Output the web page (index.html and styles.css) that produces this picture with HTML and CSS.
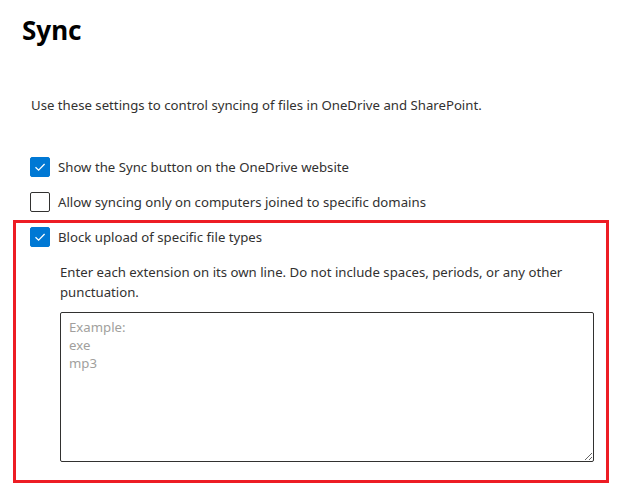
FILE: index.html
```html
<!DOCTYPE html>
<html>
<head>
<meta charset="utf-8">
<link rel="stylesheet" href="styles.css">
</head>
<body>
<div class="page">
  <h1 class="title">Sync</h1>
  <p class="desc">Use these settings to control syncing of files in OneDrive and SharePoint.</p>
  <div class="options">
    <label class="opt">
      <span class="box checked"><svg viewBox="0 0 20 20" width="20" height="20"><path d="M5.5 10.2 L8.6 13.2 L14.6 7" fill="none" stroke="#fff" stroke-width="1.3"/></svg></span>
      <span class="lbl">Show the Sync button on the OneDrive website</span>
    </label>
    <label class="opt">
      <span class="box"></span>
      <span class="lbl">Allow syncing only on computers joined to specific domains</span>
    </label>
    <div class="highlight">
      <label class="opt">
        <span class="box checked"><svg viewBox="0 0 20 20" width="20" height="20"><path d="M5.5 10.2 L8.6 13.2 L14.6 7" fill="none" stroke="#fff" stroke-width="1.3"/></svg></span>
        <span class="lbl">Block upload of specific file types</span>
      </label>
      <div class="sub">
        <p class="hint">Enter each extension on its own line. Do not include spaces, periods, or any other punctuation.</p>
        <textarea class="ta" placeholder="Example:&#10;exe&#10;mp3"></textarea>
      </div>
    </div>
  </div>
</div>
</body>
</html>
```
FILE: styles.css
```css
html, body {
  margin: 0;
  padding: 0;
  background: #fff;
}
body {
  font-family: "Noto Sans", "Open Sans", sans-serif;
  color: #323130;
  font-size: 13.2px;
}
.page {
  padding: 12px 0 0 12px;
  width: 598px;
}
.title {
  margin: 0 0 0 10px;
  font-size: 26px;
  font-weight: 700;
  color: #000;
  line-height: 36px;
}
.desc {
  margin: 47px 0 0 19px;
  line-height: 20px;
}
.options {
  margin-top: 42px;
  display: flex;
  flex-direction: column;
}
.opt {
  display: flex;
  align-items: center;
  gap: 8px;
  height: 20px;
  padding-left: 18px;
}
.opt + .opt { margin-top: 15px; }
.box {
  width: 20px;
  height: 20px;
  box-sizing: border-box;
  border: 1px solid #323130;
  border-radius: 2px;
  display: flex;
  flex: none;
}
.box.checked {
  background: #0078d4;
  border-color: #0078d4;
}
.box svg { margin: -1px; }
.lbl { line-height: 20px; }
.highlight {
  margin: 8px 0 0 1px;
  border: 3px solid #ed1c24;
  padding: 4px 0 18px 0;
  width: 596px;
  box-sizing: border-box;
}
.highlight .opt { padding-left: 14px; }
.sub {
  padding-left: 44px;
  padding-right: 12px;
}
.hint {
  margin: 15px 0 0 0;
  line-height: 20px;
}
.ta {
  display: block;
  margin-top: 10px;
  width: 534px;
  height: 150px;
  box-sizing: border-box;
  border: 1px solid #323130;
  border-radius: 2px;
  padding: 5px 8px;
  font-family: "Noto Sans", "Open Sans", sans-serif;
  font-size: 13.2px;
  line-height: 18px;
  resize: vertical;
}
.ta::placeholder { color: #a19f9d; }
```
